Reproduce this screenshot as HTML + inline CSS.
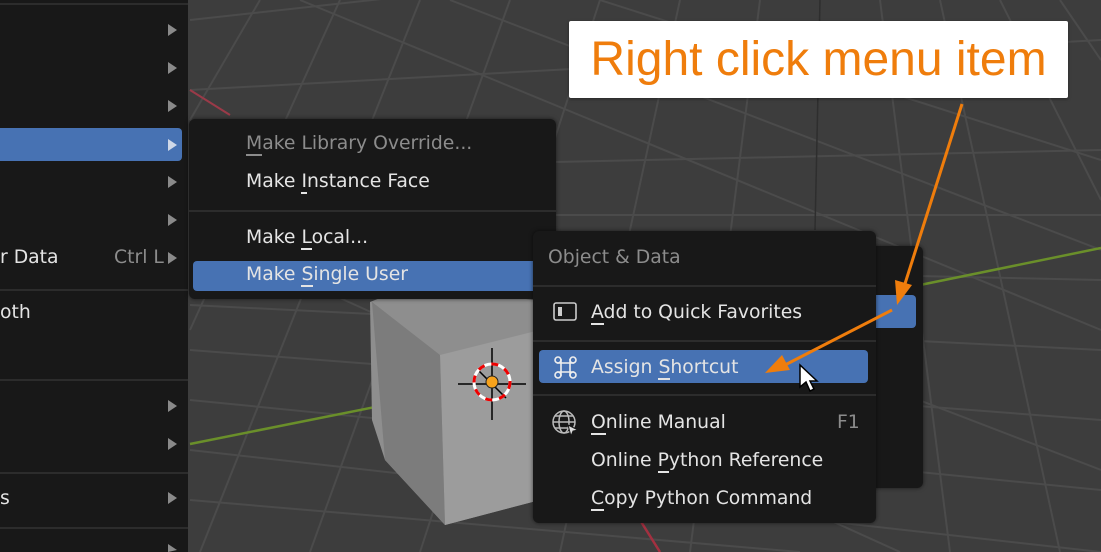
<!DOCTYPE html><html><head><style>
html,body{margin:0;width:1101px;height:552px;overflow:hidden}
body{background:#3d3d3d;font-family:"DejaVu Sans","Liberation Sans",sans-serif;position:relative}
.a{position:absolute}
.m{background:#181818;border-radius:6px;box-shadow:0 0 4px rgba(0,0,0,.6)}
.t{position:absolute;color:#e4e4e4;font-size:18.8px;white-space:nowrap;line-height:22px}
.g{color:#8c8c8c}
.hl{position:absolute;background:#4772b3;border-radius:4px}
.sep{position:absolute;height:2px;background:#2c2c2c}
.tri{position:absolute;width:0;height:0;border-left:9px solid #8a8a8a;border-top:6px solid transparent;border-bottom:6px solid transparent}
u{text-decoration:none;border-bottom:2px solid currentColor}
</style></head><body>
<svg class="a" style="left:0;top:0" width="1101" height="552">
<g stroke="#4b4b4b" stroke-width="2" fill="none">
<path d="M190 20 L1101 -80 M190 90 L1101 40 M190 170 L1101 150 M190 260 L1101 280 M190 350 L1101 420 M190 450 L1101 552 M190 -30 L1101 -140 M190 215 L1101 215 M190 305 L1101 350 M190 400 L1101 490 M190 500 L800 552"/>
<path d="M260 0 L190 120 M340 0 L190 330 M420 0 L200 552 M510 0 L310 552 M600 0 L420 552 M680 0 L560 552 M760 0 L690 552 M880 0 L950 552 M940 0 L1060 552 M1000 0 L1101 200 M1060 0 L1101 60"/>
<path d="M300 0 L1101 330 M190 230 L900 552 M600 0 L1101 160 M190 120 L1101 470 M450 0 L1101 250"/>
</g>
<path d="M820 0 L815 230" stroke="#2e2e2e" stroke-width="1.5"/>
<path d="M190 90 L230 115" stroke="#9a3a48" stroke-width="2"/>
<path d="M190 444 L400 402" stroke="#6a8f2a" stroke-width="2.5"/>
<path d="M920 285 L1101 248" stroke="#6a8f2a" stroke-width="2.5"/>
<path d="M640 520 L660 552" stroke="#a33040" stroke-width="2.5"/>
<polygon points="370,302 400,290 540,300 540,500 445,525 385,460 372,420" fill="#8e8e8e"/>
<polygon points="440,355 540,330 540,500 445,525" fill="#9c9c9c"/>
<polygon points="372,302 440,355 445,525 385,460" fill="#7c7c7c"/>
<g stroke="#000" stroke-width="1.5"><path d="M492 348 V420 M458 384 H526 M478 370 L506 398"/></g>
<circle cx="492" cy="382" r="18" fill="none" stroke="#fff" stroke-width="3"/>
<circle cx="492" cy="382" r="18" fill="none" stroke="#e00" stroke-width="3" stroke-dasharray="7 7"/>
<circle cx="492" cy="382" r="6" fill="#f7a21b" stroke="#222"/>
</svg>
<div class="a" style="left:0;top:0;width:188px;height:552px;background:#181818"></div>
<div class="sep" style="left:0;top:3px;width:188px"></div>
<div class="hl" style="left:0;top:128px;width:182px;height:33px;border-radius:0 4px 4px 0"></div>
<div class="tri" style="left:168px;top:24px"></div><div class="tri" style="left:168px;top:62px"></div><div class="tri" style="left:168px;top:100px"></div><div class="tri" style="left:168px;top:139px;border-left-color:#cfd8e8"></div><div class="tri" style="left:168px;top:176px"></div><div class="tri" style="left:168px;top:214px"></div><div class="tri" style="left:168px;top:252px"></div><div class="tri" style="left:168px;top:400px"></div><div class="tri" style="left:168px;top:438px"></div><div class="tri" style="left:168px;top:492px"></div><div class="tri" style="left:168px;top:544px;border-bottom-width:2px"></div>
<div class="t" style="left:0;top:247px">r Data</div><div class="t g" style="left:114px;top:247px">Ctrl L</div>
<div class="sep" style="left:0;top:289px;width:188px"></div>
<div class="t" style="left:0;top:302px">oth</div>
<div class="sep" style="left:0;top:379px;width:188px"></div>
<div class="sep" style="left:0;top:472px;width:188px"></div>
<div class="t" style="left:0;top:488px">s</div>
<div class="sep" style="left:0;top:527px;width:188px"></div>
<div class="a m" style="left:189px;top:119px;width:367px;height:180px"></div>
<div class="t g" style="left:246px;top:133px"><u>M</u>ake Library Override...</div>
<div class="t" style="left:246px;top:171px">Make <u>I</u>nstance Face</div>
<div class="sep" style="left:189px;top:210px;width:367px"></div>
<div class="t" style="left:246px;top:227px">Make <u>L</u>ocal...</div>
<div class="hl" style="left:193px;top:261px;width:350px;height:30px"></div>
<div class="t" style="left:246px;top:264px">Make <u>S</u>ingle User</div>
<div class="a m" style="left:860px;top:246px;width:63px;height:242px"></div>
<div class="hl" style="left:870px;top:295px;width:46px;height:33px"></div>
<div class="a m" style="left:533px;top:231px;width:343px;height:292px"></div>
<div class="t g" style="left:548px;top:247px">Object &amp; Data</div>
<div class="sep" style="left:533px;top:285px;width:343px"></div>
<svg class="a" style="left:553px;top:301px" width="24" height="22"><rect x="1" y="2" width="22" height="17" rx="2" fill="none" stroke="#ccc" stroke-width="1.6"/><rect x="5" y="6" width="4" height="9" fill="#ccc"/></svg>
<div class="t" style="left:591px;top:302px"><u>A</u>dd to Quick Favorites</div>
<div class="sep" style="left:533px;top:340px;width:343px"></div>
<div class="hl" style="left:539px;top:350px;width:329px;height:33px"></div>
<svg class="a" style="left:553px;top:355px" width="26" height="26" fill="none" stroke="#eee" stroke-width="1.6"><path d="M8 4 V21 M17 4 V21 M4 8 H21 M4 17 H21"/><circle cx="5" cy="5" r="3"/><circle cx="20" cy="5" r="3"/><circle cx="5" cy="20" r="3"/><circle cx="20" cy="20" r="3"/></svg>
<div class="t" style="left:591px;top:357px">Assign <u>S</u>hortcut</div>
<div class="sep" style="left:533px;top:394px;width:343px"></div>
<svg class="a" style="left:551px;top:409px" width="30" height="28" fill="none" stroke="#bbb" stroke-width="1.5"><circle cx="13" cy="13" r="11"/><ellipse cx="13" cy="13" rx="5" ry="11"/><path d="M2 13 H24 M4 7 H22 M4 19 H20"/><path d="M17 16 L27 21 L22 22 L20 27 Z" fill="#ddd" stroke="#181818" stroke-width="1"/></svg>
<div class="t" style="left:591px;top:412px"><u>O</u>nline Manual</div><div class="t g" style="left:837px;top:412px">F1</div>
<div class="t" style="left:591px;top:450px">Online <u>P</u>ython Reference</div>
<div class="t" style="left:591px;top:488px"><u>C</u>opy Python Command</div>
<svg class="a" style="left:798px;top:363px" width="24" height="30"><path d="M2 2 L2 24 L8 19 L12 28 L16 26 L12 18 L19 18 Z" fill="#fff" stroke="#000" stroke-width="1.5"/></svg>
<div class="a" style="left:569px;top:21px;width:499px;height:77px;background:#fff;border-radius:2px;box-shadow:0 1px 3px rgba(0,0,0,.4)"></div>
<div class="a" style="left:569px;top:21px;width:499px;height:77px;text-align:center;font-family:'Liberation Sans',sans-serif;font-size:48px;line-height:77px;color:#ef7d0c">Right click menu item</div>
<svg class="a" style="left:0;top:0" width="1101" height="552"><g stroke="#ef7d0c" stroke-width="3" fill="#ef7d0c"><path d="M962 104 L903 290"/><path d="M892 310 L785 365"/></g><polygon points="897,305 895,280 912,285" fill="#ef7d0c"/><polygon points="765,373 782,355 790,370" fill="#ef7d0c"/></svg>
</body></html>
